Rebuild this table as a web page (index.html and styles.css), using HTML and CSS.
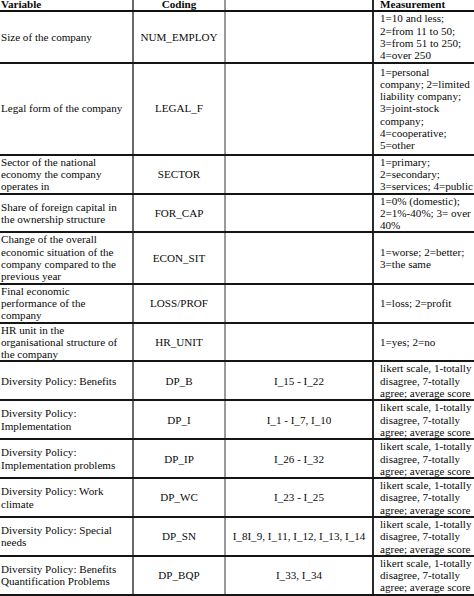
FILE: index.html
```html
<!DOCTYPE html>
<html>
<head>
<meta charset="utf-8">
<link rel="stylesheet" href="styles.css">
</head>
<body>
<div class="page">
<table class="vars">
  <colgroup>
    <col class="c-var">
    <col class="c-code">
    <col class="c-items">
    <col class="c-meas">
  </colgroup>
  <thead>
    <tr class="head">
      <th class="var">Variable</th>
      <th class="code">Coding</th>
      <th class="items"></th>
      <th class="meas"><div class="txt">Measurement</div></th>
    </tr>
  </thead>
  <tbody>
    <tr>
      <td class="var">Size of the company</td>
      <td class="code">NUM_EMPLOY</td>
      <td class="items"></td>
      <td class="meas"><div class="txt">1=10 and less;<br>2=from 11 to 50;<br>3=from 51 to 250;<br>4=over 250</div></td>
    </tr>
    <tr class="tall">
      <td class="var">Legal form of the company</td>
      <td class="code">LEGAL_F</td>
      <td class="items"></td>
      <td class="meas"><div class="txt">1=personal company; 2=limited liability company; 3=joint-stock company; 4=cooperative; 5=other</div></td>
    </tr>
    <tr>
      <td class="var">Sector of the national economy the company operates in</td>
      <td class="code">SECTOR</td>
      <td class="items"></td>
      <td class="meas"><div class="txt">1=primary;<br>2=secondary;<br>3=services; 4=public</div></td>
    </tr>
    <tr>
      <td class="var">Share of foreign capital in the ownership structure</td>
      <td class="code">FOR_CAP</td>
      <td class="items"></td>
      <td class="meas"><div class="txt">1=0% (domestic);<br>2=1%-40%; 3= over 40%</div></td>
    </tr>
    <tr>
      <td class="var">Change of the overall economic situation of the company compared to the previous year</td>
      <td class="code">ECON_SIT</td>
      <td class="items"></td>
      <td class="meas"><div class="txt">1=worse; 2=better;<br>3=the same</div></td>
    </tr>
    <tr>
      <td class="var">Final economic performance of the company</td>
      <td class="code">LOSS/PROF</td>
      <td class="items"></td>
      <td class="meas"><div class="txt">1=loss; 2=profit</div></td>
    </tr>
    <tr>
      <td class="var">HR unit in the organisational structure of the company</td>
      <td class="code">HR_UNIT</td>
      <td class="items"></td>
      <td class="meas"><div class="txt">1=yes; 2=no</div></td>
    </tr>
    <tr>
      <td class="var">Diversity Policy: Benefits</td>
      <td class="code">DP_B</td>
      <td class="items">I_15 - I_22</td>
      <td class="meas"><div class="txt">likert scale, 1-totally disagree, 7-totally agree; average score</div></td>
    </tr>
    <tr>
      <td class="var">Diversity Policy: Implementation</td>
      <td class="code">DP_I</td>
      <td class="items">I_1 - I_7, I_10</td>
      <td class="meas"><div class="txt">likert scale, 1-totally disagree, 7-totally agree; average score</div></td>
    </tr>
    <tr>
      <td class="var">Diversity Policy: Implementation problems</td>
      <td class="code">DP_IP</td>
      <td class="items">I_26 - I_32</td>
      <td class="meas"><div class="txt">likert scale, 1-totally disagree, 7-totally agree; average score</div></td>
    </tr>
    <tr>
      <td class="var">Diversity Policy: Work climate</td>
      <td class="code">DP_WC</td>
      <td class="items">I_23 - I_25</td>
      <td class="meas"><div class="txt">likert scale, 1-totally disagree, 7-totally agree; average score</div></td>
    </tr>
    <tr>
      <td class="var">Diversity Policy: Special needs</td>
      <td class="code">DP_SN</td>
      <td class="items">I_8I_9, I_11, I_12, I_13, I_14</td>
      <td class="meas"><div class="txt">likert scale, 1-totally disagree, 7-totally agree; average score</div></td>
    </tr>
    <tr>
      <td class="var">Diversity Policy: Benefits Quantification Problems</td>
      <td class="code">DP_BQP</td>
      <td class="items">I_33, I_34</td>
      <td class="meas"><div class="txt">likert scale, 1-totally disagree, 7-totally agree; average score</div></td>
    </tr>
  </tbody>
</table>
</div>
</body>
</html>
```

FILE: styles.css
```css
html, body {
  margin: 0;
  padding: 0;
  background: #ffffff;
}

.page {
  width: 474px;
  height: 596px;
  overflow: hidden;
  background: #ffffff;
}

.vars {
  margin-top: -1px;
  border-collapse: collapse;
  table-layout: fixed;
  width: 492px;
  font-family: "Liberation Serif", "Times New Roman", serif;
  font-size: 11.1px;
  line-height: 12.3px;
  color: #0a0a0a;
}

.c-var { width: 133px; }
.c-code { width: 92px; }
.c-items { width: 148px; }
.c-meas { width: 119px; }

.vars th,
.vars td {
  padding: 0;
  vertical-align: middle;
  border-bottom: 2px solid #151515;
}

.vars th {
  font-weight: bold;
  line-height: 11.4px;
  border-bottom: 2px solid #111111;
}

.var {
  text-align: left;
  padding-left: 1px !important;
  padding-right: 7px !important;
  border-right: 2px solid #6a6a6a;
}

.code {
  text-align: center;
  border-right: 2px solid #9a9a9a;
}

.items {
  text-align: center;
  white-space: nowrap;
  border-right: 2px solid #2a2a2a;
}

.meas {
  text-align: left;
  padding-left: 6px !important;
}

.meas .txt {
  width: 95px;
  white-space: normal;
}

.head .meas .txt {
  white-space: nowrap;
}

.tall td {
  padding-top: 2px;
  padding-bottom: 2px;
}
```
